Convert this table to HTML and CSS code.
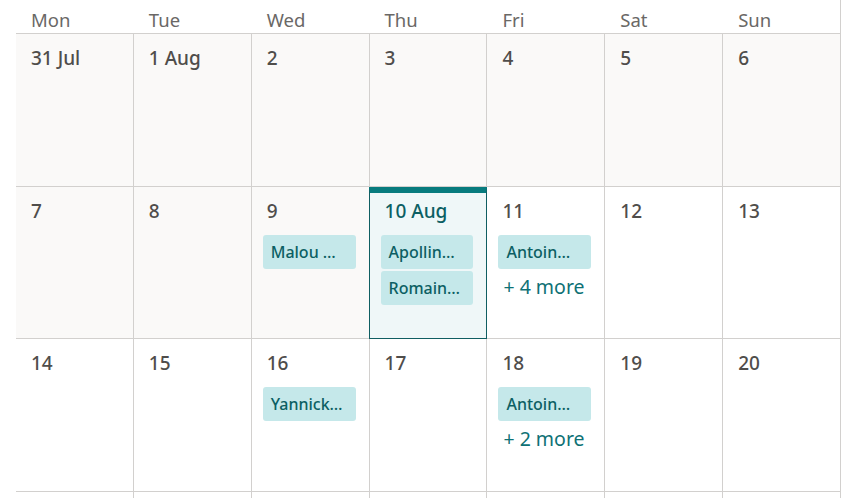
FILE: index.html
```html
<!DOCTYPE html>
<html lang="en">
<head>
<meta charset="utf-8">
<title>Calendar</title>
<link rel="stylesheet" href="styles.css">
</head>
<body>
<div class="calendar">
  <div class="weekdays">
    <div class="wd">Mon</div><div class="wd">Tue</div><div class="wd">Wed</div><div class="wd">Thu</div><div class="wd">Fri</div><div class="wd">Sat</div><div class="wd">Sun</div>
  </div>
  <div class="week">
    <div class="day past"><div class="date">31 Jul</div></div>
    <div class="day past"><div class="date">1 Aug</div></div>
    <div class="day past"><div class="date">2</div></div>
    <div class="day past"><div class="date">3</div></div>
    <div class="day past"><div class="date">4</div></div>
    <div class="day past"><div class="date">5</div></div>
    <div class="day past"><div class="date">6</div></div>
  </div>
  <div class="week">
    <div class="day past"><div class="date">7</div></div>
    <div class="day past"><div class="date">8</div></div>
    <div class="day past"><div class="date">9</div><div class="event">Malou …</div></div>
    <div class="day today"><div class="date">10 Aug</div><div class="event">Apollin…</div><div class="event">Romain…</div></div>
    <div class="day"><div class="date">11</div><div class="event">Antoin…</div><div class="more">+ 4 more</div></div>
    <div class="day"><div class="date">12</div></div>
    <div class="day"><div class="date">13</div></div>
  </div>
  <div class="week">
    <div class="day"><div class="date">14</div></div>
    <div class="day"><div class="date">15</div></div>
    <div class="day"><div class="date">16</div><div class="event">Yannick…</div></div>
    <div class="day"><div class="date">17</div></div>
    <div class="day"><div class="date">18</div><div class="event">Antoin…</div><div class="more">+ 2 more</div></div>
    <div class="day"><div class="date">19</div></div>
    <div class="day"><div class="date">20</div></div>
  </div>
  <div class="week">
    <div class="day"></div>
    <div class="day"></div>
    <div class="day"></div>
    <div class="day"></div>
    <div class="day"></div>
    <div class="day"></div>
    <div class="day"></div>
  </div>
</div>
</body>
</html>
```
FILE: styles.css
```css
html, body {
  margin: 0;
  padding: 0;
  overflow: hidden;
  background: #ffffff;
}
body {
  font-family: "Noto Sans", "Open Sans", sans-serif;
  color: #484644;
}
.calendar {
  margin-left: 16px;
  width: 825px;
}
.weekdays {
  display: grid;
  grid-template-columns: repeat(7, 1fr);
  height: 34px;
  box-sizing: border-box;
  border-bottom: 1px solid #d2d0ce;
}
.wd {
  padding: 8px 0 0 15px;
  font-size: 18.5px;
  line-height: 24px;
  color: #6a6866;
  font-weight: 400;
}
.wd:last-child {
  border-right: 1px solid #d2d0ce;
}
.week {
  display: grid;
  grid-template-columns: repeat(7, 1fr);
  height: 152.5px;
}
.day {
  box-sizing: border-box;
  border-right: 1px solid #d2d0ce;
  border-bottom: 1px solid #d2d0ce;
  padding: 12px 13px 0 11px;
  min-width: 0;
}
.past {
  background: #faf9f8;
}
.date {
  padding-left: 4px;
  font-size: 19px;
  line-height: 24px;
  font-weight: 500;
  color: #4f4d4b;
  margin-bottom: 12px;
}
.event {
  height: 34px;
  line-height: 34px;
  padding: 0 8px;
  margin-bottom: 2px;
  background: #c5e8ea;
  border-radius: 3px;
  color: #0c5f63;
  font-size: 16px;
  font-weight: 500;
  white-space: nowrap;
  overflow: hidden;
  text-overflow: ellipsis;
}
.more {
  height: 34px;
  line-height: 32px;
  padding-left: 5px;
  font-size: 19.5px;
  color: #0e7175;
}
.today {
  position: relative;
  background: #eff7f8;
}
.today .date {
  color: #0c5f63;
}
.today::after {
  content: "";
  position: absolute;
  top: 0;
  left: -1px;
  right: -1px;
  bottom: -1px;
  border: 1px solid #0f5e62;
  border-top: 6px solid #077b7e;
  pointer-events: none;
}
```
